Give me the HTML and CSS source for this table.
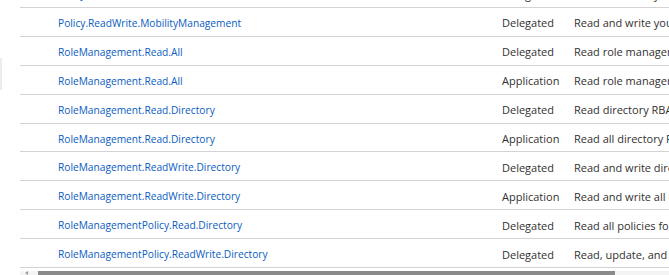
FILE: index.html
```html
<!DOCTYPE html>
<html lang="en">
<head>
<meta charset="utf-8">
<title>Permissions</title>
<link rel="stylesheet" href="styles.css">
</head>
<body>
<div class="page">
  <aside class="side"><div class="side-tab"></div></aside>
  <main class="table">
    <div class="rows">
      <div class="row row-cut"><span class="name"><a>Policy.ReadWrite.FeatureRollout</a></span><span class="type">Delegated</span><span class="desc">Read and write your organization's feature rollout policies</span></div>
      <div class="row"><span class="name"><a>Policy.ReadWrite.MobilityManagement</a></span><span class="type">Delegated</span><span class="desc">Read and write your organization's mobility management policies</span></div>
      <div class="row"><span class="name"><a>RoleManagement.Read.All</a></span><span class="type">Delegated</span><span class="desc">Read role management data for all RBAC providers</span></div>
      <div class="row"><span class="name"><a>RoleManagement.Read.All</a></span><span class="type">Application</span><span class="desc">Read role management data for all RBAC providers</span></div>
      <div class="row"><span class="name"><a>RoleManagement.Read.Directory</a></span><span class="type">Delegated</span><span class="desc">Read directory RBAC settings</span></div>
      <div class="row"><span class="name"><a>RoleManagement.Read.Directory</a></span><span class="type">Application</span><span class="desc">Read all directory RBAC settings</span></div>
      <div class="row"><span class="name"><a>RoleManagement.ReadWrite.Directory</a></span><span class="type">Delegated</span><span class="desc">Read and write directory RBAC settings</span></div>
      <div class="row"><span class="name"><a>RoleManagement.ReadWrite.Directory</a></span><span class="type">Application</span><span class="desc">Read and write all directory RBAC settings</span></div>
      <div class="row"><span class="name"><a>RoleManagementPolicy.Read.Directory</a></span><span class="type">Delegated</span><span class="desc">Read all policies for privileged role assignments of your company's directory</span></div>
      <div class="row"><span class="name"><a>RoleManagementPolicy.ReadWrite.Directory</a></span><span class="type">Delegated</span><span class="desc">Read, update, and delete all policies for privileged role assignments of your company's directory</span></div>
    </div>
    <div class="hscroll">
      <span class="arrow"></span>
      <span class="thumb"></span>
    </div>
  </main>
</div>
</body>
</html>
```
FILE: styles.css
```css
html, body {
  margin: 0;
  padding: 0;
  background: #ffffff;
  overflow: hidden;
}
body {
  width: 669px;
  height: 275px;
  font-family: "Segoe UI", "Open Sans", "Noto Sans", sans-serif;
  font-size: 11px;
  color: #323130;
}
.page {
  display: flex;
  height: 275px;
  overflow: hidden;
}
.side {
  width: 20px;
  flex: none;
}
.side-tab {
  width: 2px;
  height: 32px;
  margin-top: 58px;
  background: #ececec;
}
.table {
  flex: 1;
  min-width: 0;
  display: flex;
  flex-direction: column;
}
.rows {
  margin-top: -20.9px;
}
.row {
  display: grid;
  grid-template-columns: 482px 72px 1fr;
  align-items: center;
  height: 28.9px;
  box-sizing: border-box;
  padding-top: 2px;
  border-bottom: 1px solid #d3d3d3;
  white-space: nowrap;
}
.name {
  padding-left: 38px;
  font-size: 10.2px;
}
.name a {
  color: #0a5cc2;
}
.desc {
  overflow: hidden;
}
.hscroll {
  margin-top: 3px;
  height: 6px;
  display: flex;
  align-items: flex-start;
  background: #f4f4f4;
}
.arrow {
  width: 0;
  height: 0;
  margin: 0 10px 0 5px;
  border-style: solid;
  border-width: 2px 3px 2px 0;
  border-color: transparent #9a9a9a transparent transparent;
}
.thumb {
  width: 577px;
  height: 6px;
  background: #8a8a8a;
}
```
